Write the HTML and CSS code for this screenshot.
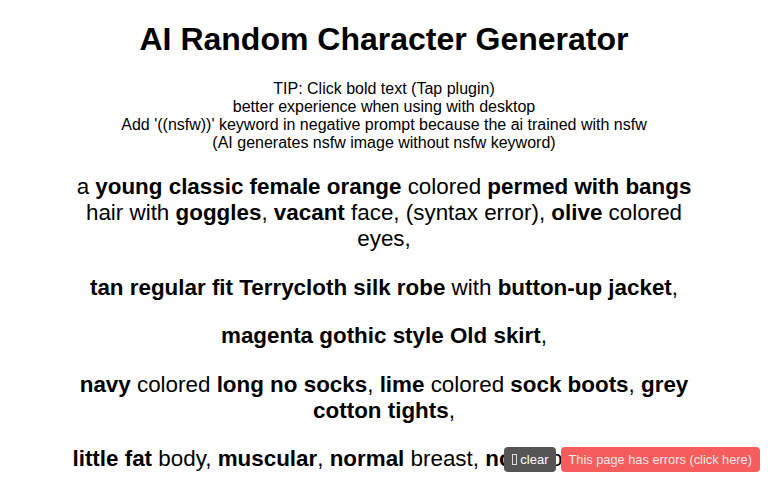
FILE: index.html
```html
<!DOCTYPE html>
<html>
<head>
<meta charset="utf-8">
<link rel="stylesheet" href="styles.css">
</head>
<body>
<h1 class="title">AI Random Character Generator</h1>
<div class="tips">
  <div>TIP: Click bold text (Tap plugin)</div>
  <div>better experience when using with desktop</div>
  <div>Add '((nsfw))' keyword in negative prompt because the ai trained with nsfw</div>
  <div>(AI generates nsfw image without nsfw keyword)</div>
</div>
<div class="output">
  <p class="para">a <b>young classic female orange</b> colored <b>permed with bangs</b> hair with <b>goggles</b>, <b>vacant</b> face, (syntax error), <b>olive</b> colored eyes,</p>
  <p class="para"><b>tan regular fit Terrycloth silk robe</b> with <b>button-up jacket</b>,</p>
  <p class="para"><b>magenta gothic style Old skirt</b>,</p>
  <p class="para"><b>navy</b> colored <b>long no socks</b>, <b>lime</b> colored <b>sock boots</b>, <b>grey cotton tights</b>,</p>
  <p class="para"><b>little fat</b> body, <b>muscular</b>, <b>normal</b> breast, <b>no</b> tattoos, <b>pale</b> skin,</p>
</div>
<div class="floating">
  <button class="btn btn-clear"><span class="tofu"></span> clear</button>
  <button class="btn btn-error">This page has errors (click here)</button>
</div>
</body>
</html>
```
FILE: styles.css
```css
html, body {
  margin: 0;
  padding: 0;
  background: #fff;
  overflow: hidden;
}
body {
  font-family: "Liberation Sans", Arial, sans-serif;
  color: #000;
  text-align: center;
  height: 480px;
}
.title {
  font-size: 32px;
  font-weight: bold;
  margin: 21px 0 0 0;
  line-height: 37px;
}
.tips {
  margin-top: 22px;
  font-size: 16px;
  line-height: 18px;
}
.output {
  width: 640px;
  margin: 22px auto 0;
  font-size: 22.4px;
  line-height: 26px;
}
.para {
  margin: 0 0 22.5px 0;
}
.floating {
  position: fixed;
  right: 8px;
  bottom: 8px;
  display: flex;
  gap: 5px;
}
.btn {
  font-family: "Liberation Sans", Arial, sans-serif;
  font-size: 12.8px;
  border: none;
  border-radius: 4px;
  height: 25px;
  padding: 0 8px;
  color: #fff;
  display: flex;
  align-items: center;
}
.btn-clear {
  background: #555;
  gap: 3px;
  padding: 0 7px 0 8px;
  font-size: 13px;
}
.btn-error {
  background: #f55c5c;
  color: #fde8e8;
}
.tofu {
  display: inline-block;
  width: 3px;
  height: 9px;
  border: 1px solid #ddd;
}
```
